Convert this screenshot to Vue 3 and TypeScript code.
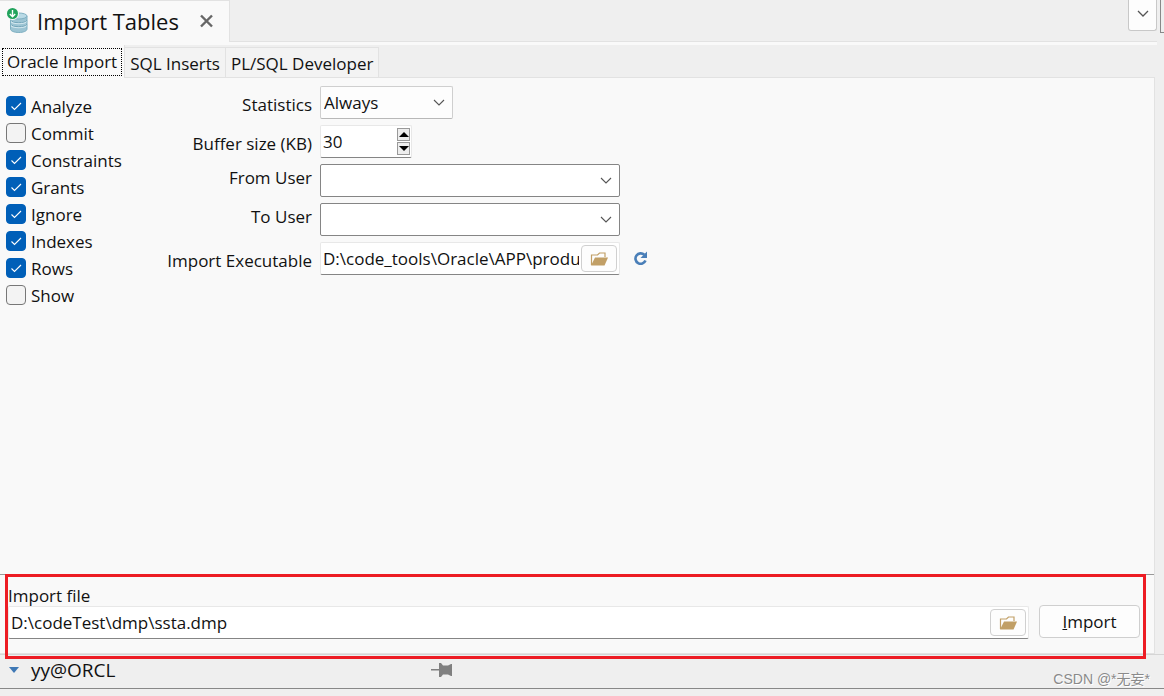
<script setup lang="ts">
import { ref } from 'vue'

interface Option {
  id: string
  label: string
  checked: boolean
}

const options = ref<Option[]>([
  { id: 'analyze', label: 'Analyze', checked: true },
  { id: 'commit', label: 'Commit', checked: false },
  { id: 'constraints', label: 'Constraints', checked: true },
  { id: 'grants', label: 'Grants', checked: true },
  { id: 'ignore', label: 'Ignore', checked: true },
  { id: 'indexes', label: 'Indexes', checked: true },
  { id: 'rows', label: 'Rows', checked: true },
  { id: 'show', label: 'Show', checked: false },
])

const tabs: string[] = ['Oracle Import', 'SQL Inserts', 'PL/SQL Developer']
const activeTab = ref<number>(0)
const statistics = ref<string>('Always')
const bufferSize = ref<number>(30)
const fromUser = ref<string>('')
const toUser = ref<string>('')
const executable = ref<string>('D:\\code_tools\\Oracle\\APP\\product')
const importFile = ref<string>('D:\\codeTest\\dmp\\ssta.dmp')
</script>

<template>
  <div class="window">
    <header class="titlebar">
      <div class="doc-tab">
        <svg class="db-icon" width="24" height="28" viewBox="0 0 24 28" aria-hidden="true">
          <path d="M4.500 9.500v12.500c0 2 3.600 3.500 8.300 3.500s8.200-1.500 8.200-3.500V9.500z" fill="#9cc4d3" />
          <path d="M4.500 13.500c1 1.800 4.300 2.700 8.300 2.700s7.200-.9 8.200-2.700M4.500 17.500c1 1.800 4.300 2.700 8.300 2.700s7.200-.9 8.200-2.700" fill="none" stroke="#d3e8ef" stroke-width="2" />
          <path d="M4.500 13c1 1.800 4.300 2.700 8.300 2.700s7.200-.9 8.200-2.700M4.500 17c1 1.800 4.300 2.700 8.300 2.700s7.200-.9 8.200-2.700" fill="none" stroke="#6fa3b7" />
          <path d="M4.500 9v13c0 2 3.600 3.500 8.300 3.500s8.200-1.500 8.200-3.500V9" fill="none" stroke="#7fb0c2" />
          <ellipse cx="12.750" cy="9" rx="8.250" ry="3" fill="#b9dae6" stroke="#7fb0c2" />
          <circle cx="6.500" cy="6.500" r="6.500" fill="#f9f9f9" />
          <circle cx="6.500" cy="6.500" r="5.500" fill="#21a35c" />
          <path d="M6.500 3v6.500M3.800 7l2.700 2.700L9.200 7" fill="none" stroke="#fff" stroke-width="1.400" />
        </svg>
        <h1 class="title">Import Tables</h1>
        <button class="close" type="button" aria-label="Close">
          <svg width="14" height="14" viewBox="0 0 14 14"><path d="M1 1.500l11 11M12 1.500l-11 11" stroke="#666" stroke-width="2.400" /></svg>
        </button>
      </div>
      <button class="list-button" type="button" aria-label="Window list">
        <svg width="12" height="8" viewBox="0 0 12 8"><path d="M1 1l5 5 5-5" fill="none" stroke="#555" stroke-width="1.300" /></svg>
      </button>
      <div class="edge"></div>
    </header>

    <div class="body">
      <nav class="tabs" role="tablist">
        <button
          v-for="(tab, i) in tabs"
          :key="tab"
          class="tab"
          :class="{ active: i === activeTab }"
          type="button"
          role="tab"
          :aria-selected="i === activeTab"
          @click="activeTab = i"
        ><span class="tab-text">{{ tab }}</span></button>
      </nav>

      <main class="panel">
        <div class="settings">
          <div class="checks">
            <label v-for="o in options" :key="o.id" class="check" :for="o.id">
              <input :id="o.id" v-model="o.checked" class="check-input" type="checkbox" />
              <svg class="tick" width="20" height="20" viewBox="0 0 20 20" aria-hidden="true"><path d="M5.500 10.500l3 3 6.500-6.500" fill="none" stroke="#fff" stroke-width="1.100" /></svg>
              <span>{{ o.label }}</span>
            </label>
          </div>

          <div class="form">
            <label class="label low" for="statistics">Statistics</label>
            <div class="combo light short">
              <select id="statistics" v-model="statistics" class="select">
                <option>Always</option>
                <option>Estimate</option>
                <option>None</option>
              </select>
              <svg class="arrow" width="12" height="8" viewBox="0 0 12 8"><path d="M1 1l5 5 5-5" fill="none" stroke="#555" stroke-width="1.100" /></svg>
            </div>

            <label class="label low" for="buffer">Buffer size (KB)</label>
            <div class="field spin">
              <input id="buffer" v-model="bufferSize" class="input" type="number" />
              <div class="spin-buttons">
                <button class="spin-button" type="button" aria-label="Increase" @click="bufferSize++">
                  <svg width="10" height="5" viewBox="0 0 10 5"><path d="M0 5L5 0l5 5z" fill="#000" /></svg>
                </button>
                <button class="spin-button" type="button" aria-label="Decrease" @click="bufferSize--">
                  <svg width="10" height="5" viewBox="0 0 10 5"><path d="M0 0l5 5 5-5z" fill="#000" /></svg>
                </button>
              </div>
            </div>

            <label class="label high" for="from-user">From User</label>
            <div class="combo">
              <select id="from-user" v-model="fromUser" class="select"><option value=""></option></select>
              <svg class="arrow" width="12" height="8" viewBox="0 0 12 8"><path d="M1 1l5 5 5-5" fill="none" stroke="#555" stroke-width="1.100" /></svg>
            </div>

            <label class="label high" for="to-user">To User</label>
            <div class="combo">
              <select id="to-user" v-model="toUser" class="select"><option value=""></option></select>
              <svg class="arrow" width="12" height="8" viewBox="0 0 12 8"><path d="M1 1l5 5 5-5" fill="none" stroke="#555" stroke-width="1.100" /></svg>
            </div>

            <label class="label low" for="executable">Import Executable</label>
            <div class="field">
              <input id="executable" v-model="executable" class="input" type="text" />
              <button class="browse" type="button" aria-label="Browse for executable">
                <svg width="18" height="14" viewBox="0 0 18 14"><path d="M1.500 13V3h6l2-2h5.500v4" fill="none" stroke="#c19f66" stroke-width="1.200" /><path d="M5 5.500h13L14.500 13.500H1z" fill="#c19f66" /></svg>
              </button>
            </div>
            <button class="refresh" type="button" aria-label="Refresh">
              <svg width="15" height="15" viewBox="0 0 15 15"><path d="M11.300 3.800A5.200 5.200 0 1 0 12.500 9.500" fill="none" stroke="#4a7fb8" stroke-width="2.600" /><path d="M14 0.500V7H7.500z" fill="#4a7fb8" /></svg>
            </button>
          </div>
        </div>

        <section class="import">
          <label class="file-label" for="file">Import file</label>
          <div class="file-row">
            <div class="field file">
              <input id="file" v-model="importFile" class="input" type="text" />
              <button class="browse" type="button" aria-label="Browse for import file">
                <svg width="18" height="14" viewBox="0 0 18 14"><path d="M1.500 13V3h6l2-2h5.500v4" fill="none" stroke="#c19f66" stroke-width="1.200" /><path d="M5 5.500h13L14.500 13.500H1z" fill="#c19f66" /></svg>
              </button>
            </div>
            <button class="import-button" type="button"><span class="key">I</span>mport</button>
          </div>
          <div class="highlight"></div>
        </section>
      </main>
    </div>

    <footer class="status">
      <button class="menu" type="button" aria-label="Connection menu">
        <svg width="10" height="6" viewBox="0 0 10 6"><path d="M0 0h10L5 6z" fill="#3f78b5" /></svg>
      </button>
      <span class="connection">yy@ORCL</span>
      <button class="pin" type="button" aria-label="Pin">
        <svg width="22" height="14" viewBox="0 0 22 14"><path d="M0 6h8V0h2l2 2.500h5L20 1h1v12h-1l-3-1.500h-5L10 14H8V7.500H0z" fill="#808080" /></svg>
      </button>
      <span class="watermark">CSDN @*无妄*</span>
    </footer>
  </div>
</template>

<style>
body {
  margin: 0;
  background: #efefef;
}
</style>

<style scoped>
.window {
  display: flex;
  flex-direction: column;
  min-height: 100vh;
  box-sizing: border-box;
  padding-bottom: 7px;
  background: #efefef;
  color: #111;
  font: 17px/24px "Open Sans", "Noto Sans", sans-serif;
}
button,
input,
select {
  box-sizing: border-box;
  margin: 0;
  padding: 0;
  border: 0;
  background: none;
  color: inherit;
  font: inherit;
}
button {
  display: flex;
  align-items: center;
  justify-content: center;
}
input:focus,
select:focus {
  outline: none;
}
.titlebar {
  display: flex;
  align-items: flex-start;
  height: 41px;
}
.doc-tab {
  display: flex;
  align-items: center;
  box-sizing: border-box;
  width: 230px;
  height: 42px;
  padding: 0 0 2px 6px;
  border-top: 1px solid #e2e2e2;
  border-right: 1px solid #e2e2e2;
  background: #f9f9f9;
  position: relative;
}
.title {
  flex: 1;
  margin: 0 0 0 7px;
  font-size: 22px;
  font-weight: 400;
  line-height: 32px;
  white-space: nowrap;
}
.close {
  width: 14px;
  height: 20px;
  margin-right: 15px;
}
.list-button {
  width: 29px;
  height: 31px;
  padding-bottom: 2px;
  margin-left: auto;
  border: 1px solid #c8c8c8;
  border-top: 0;
  border-radius: 0 0 3px 3px;
  background: #fdfdfd;
}
.edge {
  box-sizing: border-box;
  width: 4px;
  height: 33px;
  margin-left: 3px;
  border-left: 1px solid #888;
  border-bottom: 1px solid #888;
}
.body {
  display: flex;
  flex: 1;
  flex-direction: column;
  margin-right: 7px;
  border-top: 1px solid #e2e2e2;
}
.tabs {
  display: flex;
  align-items: flex-end;
  height: 32px;
  border-top: 3px solid #f9f9f9;
}
.tab {
  height: 30px;
  padding: 2px 5px 0;
  border: 1px solid #e2e2e2;
  border-left: 0;
  border-bottom: 0;
  background: #f3f3f3;
  white-space: nowrap;
}
.tab.active {
  height: 33px;
  margin-bottom: -1px;
  padding: 0 2px;
  border-top: 0;
  background: #f9f9f9;
  position: relative;
}
.tab.active .tab-text {
  padding: 1px 4px;
  border: 1px dotted #000;
}
.panel {
  display: flex;
  flex: 1;
  flex-direction: column;
  margin-right: 2px;
  border: 1px solid #e2e2e2;
  border-left: 0;
  background: #f9f9f9;
}
.settings {
  display: flex;
  flex: 1;
  align-items: flex-start;
  gap: 38px;
  padding: 8px 6px;
}
.checks {
  display: flex;
  flex-direction: column;
  width: 125px;
  padding-top: 8px;
}
.check {
  display: flex;
  gap: 5px;
  height: 27px;
  position: relative;
  line-height: 25px;
}
.check-input {
  flex: none;
  align-self: flex-start;
  appearance: none;
  width: 20px;
  height: 20px;
  margin-top: 2px;
  border: 1px solid #777;
  border-radius: 4px;
  background: #f3f3f3;
}
.check-input:checked {
  border-color: #005fb8;
  background: #005fb8;
}
.tick {
  position: absolute;
  top: 2px;
  left: 0;
}
.check-input:not(:checked) + .tick {
  display: none;
}
.form {
  display: grid;
  grid-template-columns: 143px 300px 40px;
  grid-auto-rows: 33px;
  gap: 6px 8px;
}
.label {
  display: flex;
  grid-column: 1;
  justify-content: flex-end;
  line-height: 33px;
  white-space: nowrap;
}
.low {
  padding-top: 2px;
}
.high {
  line-height: 28px;
}
.combo {
  display: flex;
  align-items: center;
  box-sizing: border-box;
  grid-column: 2;
  border: 1px solid #858585;
  border-radius: 2px;
  background: #fff;
  position: relative;
}
.light {
  border-color: #cfcfcf #cfcfcf #b8b8b8;
  background: #fdfdfd;
}
.short {
  width: 133px;
}
.select {
  appearance: none;
  width: 100%;
  height: 100%;
  padding: 0 26px 0 3px;
}
.arrow {
  position: absolute;
  right: 7px;
  pointer-events: none;
}
.field {
  display: flex;
  align-items: center;
  box-sizing: border-box;
  grid-column: 2;
  height: 33px;
  padding-right: 2px;
  border: 1px solid #e8e8e8;
  border-bottom-color: #858585;
  border-radius: 2px;
  background: #fff;
}
.input {
  flex: 1;
  appearance: textfield;
  min-width: 0;
  height: 31px;
  padding-left: 2px;
}
.input::-webkit-inner-spin-button {
  appearance: none;
  margin: 0;
}
.spin {
  width: 92px;
  padding-right: 1px;
}
.spin-buttons {
  display: flex;
  flex-direction: column;
  gap: 1px;
}
.spin-button {
  width: 13px;
  height: 13px;
  border: 1px solid #999;
  background: #eee;
}
.browse {
  width: 36px;
  height: 27px;
  margin-left: 2px;
  border: 1px solid #d0d0d0;
  border-radius: 4px;
  background: #fdfdfd;
}
.refresh {
  grid-column: 3;
  justify-content: flex-start;
  padding-left: 5px;
}
.import {
  padding: 10px 14px 14px 8px;
  border-top: 1px solid #999;
  position: relative;
}
.file-label {
  display: block;
  height: 20px;
  line-height: 21px;
}
.file-row {
  display: flex;
  gap: 10px;
}
.file {
  flex: 1;
  margin-top: 1px;
  position: relative;
}
.import-button {
  width: 101px;
  height: 33px;
  padding-top: 1px;
  border: 1px solid #cfcfcf;
  border-radius: 4px;
  background: #fdfdfd;
}
.key {
  text-decoration: underline;
}
.highlight {
  position: absolute;
  inset: -1px 8px -6px 5px;
  border: 3px solid #ed1c24;
  pointer-events: none;
}
.status {
  display: flex;
  align-items: center;
  box-sizing: border-box;
  height: 35px;
  padding: 0 14px 3px 9px;
  border-top: 1px solid #d5d5d5;
  border-bottom: 1px solid #888;
}
.menu {
  width: 10px;
  height: 20px;
}
.connection {
  width: 400px;
  margin-left: 12px;
  font-size: 19px;
}
.pin {
  width: 22px;
  height: 20px;
}
.watermark {
  margin: 18px 0 0 auto;
  color: #8a8a8a;
  font: 14px/20px "Liberation Sans", "Noto Sans CJK SC", sans-serif;
  text-shadow: 1px 1px 0 #fff;
}
</style>
